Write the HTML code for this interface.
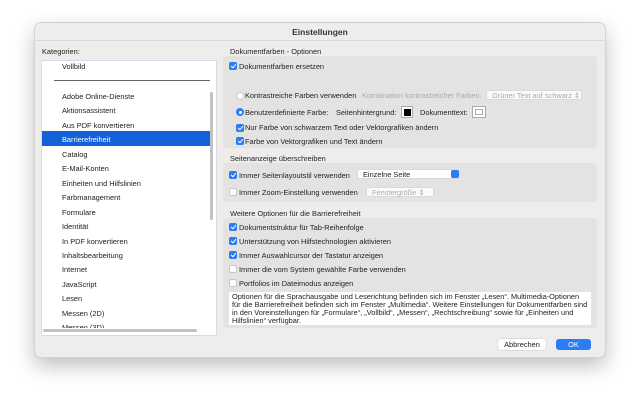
<!DOCTYPE html><html><head><meta charset="utf-8"><style>
*{margin:0;padding:0;box-sizing:border-box}
body{width:640px;height:404px;background:#fff;font-family:"Liberation Sans",sans-serif;font-size:7.4px;color:#222;position:relative;overflow:hidden}
.a{position:absolute;white-space:nowrap}
#win{position:absolute;left:34px;top:22px;width:572px;height:336px;background:#efedeb;border-radius:7px;border:1px solid #d4d2d0;box-shadow:0 8px 20px rgba(0,0,0,.25)}
#tb{position:absolute;left:0;top:0;width:100%;height:18px;border-bottom:1px solid #dddbd9;text-align:center;font-weight:bold;font-size:8.5px;line-height:18px;color:#333}
.box{position:absolute;left:223px;width:374px;background:#e5e3e2;border-radius:4px}
.cb{position:absolute;width:8px;height:8px;border-radius:2px;background:#2b7cf5}
.cb::after{content:"";position:absolute;left:2.5px;top:1px;width:2px;height:4px;border:solid #fff;border-width:0 1.3px 1.3px 0;transform:rotate(40deg)}
.cu{position:absolute;width:8px;height:8px;border-radius:2px;background:#fff;border:0.5px solid #c8c6c4}
.g{color:#aaa}
.sel{position:absolute;background:#fafafa;border:1px solid #dcdad8;border-radius:3px;color:#aaa;padding-left:5px;line-height:9px}
</style></head><body>
<div id="win"><div id="tb">Einstellungen</div></div>
<div class="a" style="left:42px;top:47px">Kategorien:</div>
<div class="a" style="left:41px;top:60px;width:176px;height:276px;background:#fff;border:1px solid #d5dbe6"></div>
<div class="a" style="left:42px;top:61px;width:168px;height:267px;overflow:hidden">
<div class="a" style="left:20px;top:1px">Vollbild</div>
<div class="a" style="left:12px;top:19px;width:156px;height:1px;background:#666"></div>
<div class="a" style="left:0;top:70px;width:168px;height:15px;background:#1461d9"></div>
<div class="a" style="left:20px;top:29px;line-height:14.45px">Adobe Online-Dienste<br>Aktionsassistent<br>Aus PDF konvertieren<br><span style="color:#fff">Barrierefreiheit</span><br>Catalog<br>E-Mail-Konten<br>Einheiten und Hilfslinien<br>Farbmanagement<br>Formulare<br>Identität<br>In PDF konvertieren<br>Inhaltsbearbeitung<br>Internet<br>JavaScript<br>Lesen<br>Messen (2D)<br>Messen (3D)</div>
</div>
<div class="a" style="left:43px;top:329px;width:154px;height:3px;border-radius:2px;background:#c2c2c2"></div>
<div class="a" style="left:210px;top:92px;width:3px;height:128px;border-radius:2px;background:#c2c2c2"></div>

<div class="a" style="left:230px;top:47px">Dokumentfarben - Optionen</div>
<div class="box" style="top:56px;height:92px"></div>
<div class="cb" style="left:229px;top:62px"></div><div class="a" style="left:239px;top:62px">Dokumentfarben ersetzen</div>
<div class="cu" style="left:236px;top:92px;border-radius:50%"></div><div class="a" style="left:245px;top:91px">Kontrastreiche Farben verwenden</div>
<div class="a g" style="left:362px;top:91px">Kombination kontrastreicher Farben:</div>
<div class="sel" style="left:486px;top:90px;width:96px;height:10px">Grüner Text auf schwarz ⇕</div>
<div class="a" style="left:236px;top:108px;width:8px;height:8px;border-radius:50%;background:#2b7cf5"><div style="position:absolute;left:2.5px;top:2.5px;width:3px;height:3px;border-radius:50%;background:#fff"></div></div>
<div class="a" style="left:245px;top:108px">Benutzerdefinierte Farbe:</div>
<div class="a" style="left:336px;top:108px">Seitenhintergrund:</div>
<div class="a" style="left:401px;top:106px;width:12px;height:12px;background:#fff;border:1px solid #aaa;padding:1.5px"><div style="width:100%;height:100%;background:#000"></div></div>
<div class="a" style="left:420px;top:108px">Dokumenttext:</div>
<div class="a" style="left:472px;top:106px;width:14px;height:12px;background:#fff;border:1px solid #aaa;padding:2px"><div style="width:100%;height:100%;border:1px solid #aaa"></div></div>
<div class="cb" style="left:236px;top:124px"></div><div class="a" style="left:245px;top:123px">Nur Farbe von schwarzem Text oder Vektorgrafiken ändern</div>
<div class="cb" style="left:236px;top:137px"></div><div class="a" style="left:245px;top:137px">Farbe von Vektorgrafiken und Text ändern</div>

<div class="a" style="left:230px;top:154px">Seitenanzeige überschreiben</div>
<div class="box" style="top:163px;height:39px"></div>
<div class="cb" style="left:229px;top:171px"></div><div class="a" style="left:239px;top:171px">Immer Seitenlayoutstil verwenden</div>
<div class="sel" style="left:357px;top:169px;width:103px;height:10px;background:#fff;color:#222">Einzelne Seite<span style="position:absolute;right:0;top:0;width:8px;height:8px;background:#2b7cf5;border-radius:2px"></span></div>
<div class="cu" style="left:229px;top:188px"></div><div class="a" style="left:239px;top:188px">Immer Zoom-Einstellung verwenden</div>
<div class="sel" style="left:366px;top:187px;width:68px;height:10px">Fenstergröße ⇕</div>

<div class="a" style="left:230px;top:209px">Weitere Optionen für die Barrierefreiheit</div>
<div class="box" style="top:218px;height:110px"></div>
<div class="cb" style="left:229px;top:223px"></div><div class="a" style="left:239px;top:223px">Dokumentstruktur für Tab-Reihenfolge</div>
<div class="cb" style="left:229px;top:237px"></div><div class="a" style="left:239px;top:237px">Unterstützung von Hilfstechnologien aktivieren</div>
<div class="cb" style="left:229px;top:251px"></div><div class="a" style="left:239px;top:251px">Immer Auswahlcursor der Tastatur anzeigen</div>
<div class="cu" style="left:229px;top:265px"></div><div class="a" style="left:239px;top:265px">Immer die vom System gewählte Farbe verwenden</div>
<div class="cu" style="left:229px;top:279px"></div><div class="a" style="left:239px;top:279px">Portfolios im Dateimodus anzeigen</div>
<div class="a" style="left:229px;top:292px;width:362px;height:33px;background:#fff;line-height:8px;padding:1px 3px;white-space:normal">Optionen für die Sprachausgabe und Leserichtung befinden sich im Fenster „Lesen“. Multimedia-Optionen für die Barrierefreiheit befinden sich im Fenster „Multimedia“. Weitere Einstellungen für Dokumentfarben sind in den Voreinstellungen für „Formulare“, „Vollbild“, „Messen“, „Rechtschreibung“ sowie für „Einheiten und Hilfslinien“ verfügbar.</div>
<div class="a" style="left:498px;top:339px;width:48px;height:11px;background:#fff;border-radius:3px;box-shadow:0 0 0 .5px #ccc;text-align:center;line-height:11px">Abbrechen</div>
<div class="a" style="left:556px;top:339px;width:35px;height:11px;background:#2b7cf5;border-radius:3px;color:#fff;text-align:center;line-height:11px">OK</div>
</body></html>
